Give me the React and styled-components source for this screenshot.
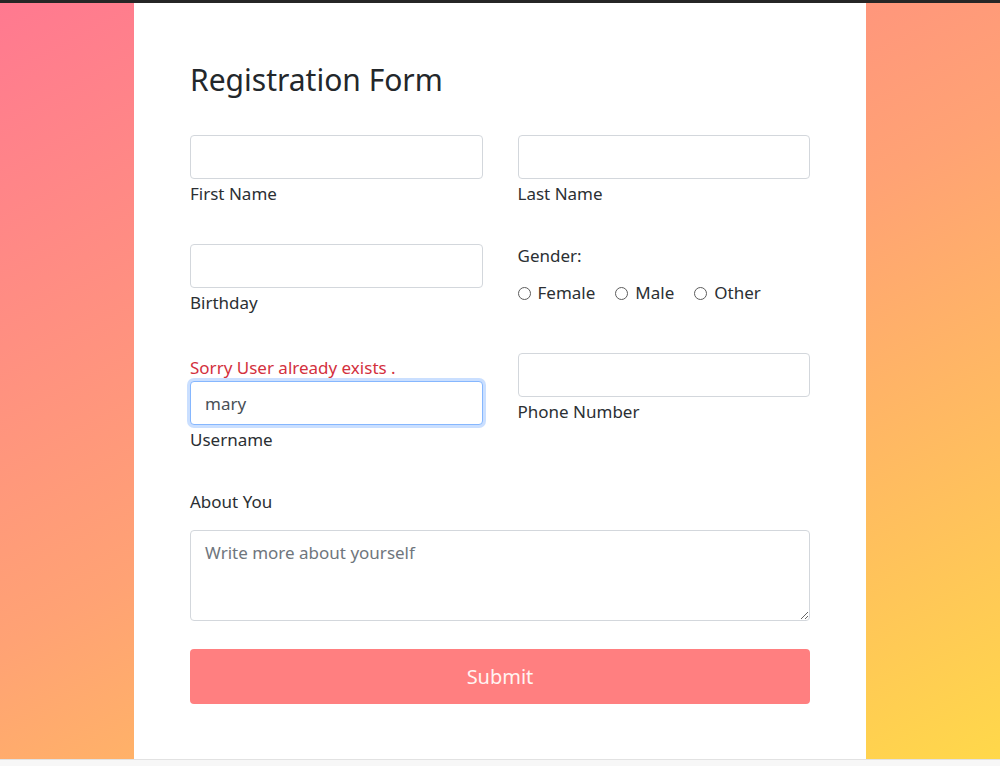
import React from 'react';
import styled, { createGlobalStyle } from 'styled-components';

const GlobalStyle = createGlobalStyle`
    * {
        box-sizing: border-box;
    }

    body {
        margin: 0;
        font-family: "Noto Sans", "Open Sans", Arial, sans-serif;
        color: #2b2f33;
        background: #f7f7f7;
    }
`;

const Page = styled.div`
    border-top: 3px solid #262626;
    height: 766px;
    display: flex;
    flex-direction: column;
`;

const Stage = styled.div`
    height: 757px;
    display: flex;
    justify-content: center;
    background: linear-gradient(152deg, #ff7990 0%, #ffa274 50%, #ffd84a 100%);
    border-bottom: 1px solid #e2e2e2;
`;

const Card = styled.form`
    width: 732px;
    background: #fff;
    padding: 59px 56px 56px;
`;

const Title = styled.h2`
    margin: 0 0 37px;
    font-size: 30px;
    line-height: 36px;
    font-weight: 400;
    color: #23272b;
`;

const Row = styled.div`
    display: grid;
    grid-template-columns: 1fr 1fr;
    column-gap: 35px;
    margin-bottom: 38px;
`;

const Field = styled.div`
    display: flex;
    flex-direction: column;
`;

const Input = styled.input`
    height: 44px;
    width: 100%;
    padding: 0 14px;
    font: inherit;
    font-size: 17px;
    color: #495057;
    background: #fff;
    border: 1px solid ${(p) => (p.$focused ? '#86b7fe' : '#d3d7dc')};
    border-radius: 4px;
    outline: none;
    box-shadow: ${(p) => (p.$focused ? '0 0 0 3px rgba(13, 110, 253, 0.22)' : 'none')};
`;

const Label = styled.label`
    margin-top: 3px;
    font-size: 17px;
    line-height: 24px;
    color: #2b2f33;
`;

const Caption = styled.div`
    font-size: 17px;
    line-height: 24px;
    color: #2b2f33;
    margin-bottom: ${(p) => p.$gap || 0}px;
`;

const ErrorText = styled.div`
    font-size: 17px;
    line-height: 28px;
    padding-top: 1px;
    margin-bottom: -1px;
    color: #d3303d;
`;

const RadioGroup = styled.div`
    display: flex;
    gap: 20px;
`;

const RadioOption = styled.label`
    display: flex;
    align-items: center;
    gap: 7px;
    font-size: 17px;
    line-height: 24px;
    color: #2b2f33;
`;

const Radio = styled.input`
    appearance: none;
    margin: 0;
    width: 13px;
    height: 13px;
    border: 1px solid #5c5c5c;
    border-radius: 50%;
    background: #fff;
`;

const TextArea = styled.textarea`
    display: block;
    width: 100%;
    height: 91px;
    padding: 10px 14px;
    font: inherit;
    font-size: 17px;
    line-height: 24px;
    color: #495057;
    border: 1px solid #d3d7dc;
    border-radius: 4px;
    outline: none;

    &::placeholder {
        color: #6f767d;
    }
`;

const SubmitButton = styled.button`
    display: block;
    width: 100%;
    height: 55px;
    margin-top: 28px;
    border: none;
    border-radius: 4px;
    background: #ff7f80;
    color: #fff4f2;
    font: inherit;
    font-size: 20px;
    cursor: pointer;
`;

function App() {
    return (
        <>
            <GlobalStyle />
            <Page>
                <Stage>
                    <Card onSubmit={(e) => e.preventDefault()}>
                        <Title>Registration Form</Title>

                        <Row>
                            <Field>
                                <Input type="text" />
                                <Label>First Name</Label>
                            </Field>
                            <Field>
                                <Input type="text" />
                                <Label>Last Name</Label>
                            </Field>
                        </Row>

                        <Row>
                            <Field>
                                <Input type="text" />
                                <Label>Birthday</Label>
                            </Field>
                            <Field>
                                <Caption $gap={13}>Gender:</Caption>
                                <RadioGroup>
                                    <RadioOption><Radio type="radio" name="gender" />Female</RadioOption>
                                    <RadioOption><Radio type="radio" name="gender" />Male</RadioOption>
                                    <RadioOption><Radio type="radio" name="gender" />Other</RadioOption>
                                </RadioGroup>
                            </Field>
                        </Row>

                        <Row>
                            <Field>
                                <ErrorText>Sorry User already exists .</ErrorText>
                                <Input type="text" defaultValue="mary" $focused />
                                <Label>Username</Label>
                            </Field>
                            <Field>
                                <Input type="text" />
                                <Label>Phone Number</Label>
                            </Field>
                        </Row>

                        <Caption $gap={16}>About You</Caption>
                        <TextArea placeholder="Write more about yourself" />
                        <SubmitButton type="submit">Submit</SubmitButton>
                    </Card>
                </Stage>
            </Page>
        </>
    );
}

export default App;
